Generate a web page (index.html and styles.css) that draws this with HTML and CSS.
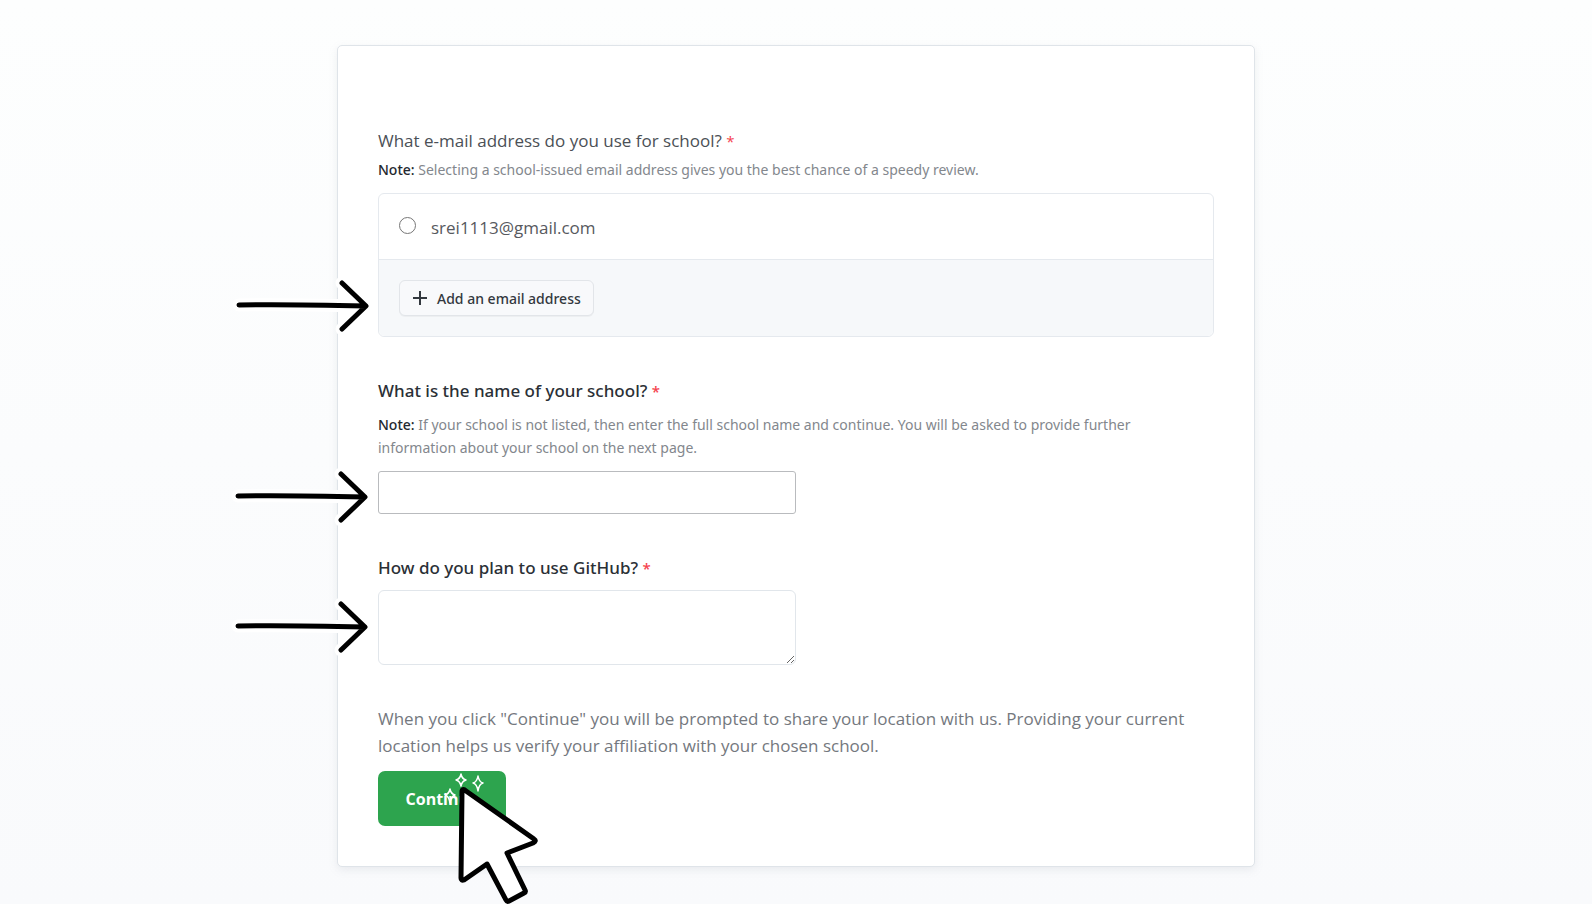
FILE: index.html
```html
<!DOCTYPE html>
<html lang="en">
	<head>
		<meta charset="UTF-8">
		<meta name="viewport" content="width=device-width, initial-scale=1">
		<title>GitHub Education</title>
		<link rel="stylesheet" href="styles.css">
	</head>
	<body>
		<main class="page">
			<form class="card">
				<fieldset class="field email_field">
					<legend class="title light">What e-mail address do you use for school? <span class="required">*</span></legend>
					<p class="note"><b>Note:</b> Selecting a school-issued email address gives you the best chance of a speedy review.</p>
					<div class="email_box">
						<label class="email_row">
							<input type="radio" name="email" class="radio">
							<span>srei1113@gmail.com</span>
						</label>
						<div class="add_row">
							<button type="button" class="add_btn">
								<svg width="16" height="16" viewBox="0 0 16 16" fill="none" stroke="#33383e" stroke-width="2" aria-hidden="true"><path d="M8 1v14M1 8h14"/></svg>
								Add an email address
							</button>
							<svg class="arrow arrow_email" width="144" height="62" viewBox="0 0 144 62" aria-hidden="true">
								<use href="#arrow"/>
							</svg>
						</div>
					</div>
				</fieldset>
				<div class="field">
					<label class="title" for="school">What is the name of your school? <span class="required">*</span></label>
					<p class="note school_note"><b>Note:</b> If your school is not listed, then enter the full school name and continue. You will be asked to provide further information about your school on the next page.</p>
					<div class="control">
						<input type="text" id="school" class="school">
						<svg class="arrow arrow_school" width="144" height="62" viewBox="0 0 144 62" aria-hidden="true">
							<use href="#arrow"/>
						</svg>
					</div>
				</div>
				<div class="field">
					<label class="title" for="plan">How do you plan to use GitHub? <span class="required">*</span></label>
					<div class="control">
						<textarea id="plan" class="plan"></textarea>
						<svg class="arrow arrow_plan" width="144" height="62" viewBox="0 0 144 62" aria-hidden="true">
							<defs>
								<g id="arrow" fill="none" stroke-linecap="round" stroke-linejoin="round">
									<path d="M9 30Q50 29 136 31M112 8l25 23-25 23" stroke="#fff" stroke-width="13"/>
									<path d="M9 30Q50 29 136 31M112 8l24 23-24 23" stroke="#000" stroke-width="5"/>
								</g>
							</defs>
							<use href="#arrow"/>
						</svg>
					</div>
				</div>
				<p class="location">When you click "Continue" you will be prompted to share your location with us. Providing your current location helps us verify your affiliation with your chosen school.</p>
				<div class="submit">
					<button type="button" class="continue">Continue</button>
					<svg class="cursor" width="100" height="133" viewBox="0 0 100 133" fill="none" stroke-linejoin="round" aria-hidden="true">
						<path d="M22 3q1 5 5 6-4 1-5 6-1-5-5-6 4-1 5-6zM39 5q1 6 5 7-4 1-5 8-1-7-5-8 4-1 5-7zM11 18q1 5 5 6-4 1-5 8-1-7-5-8 4-1 5-6z" stroke="#fff" stroke-width="1.5"/>
						<path d="M23 20Q24 17 27 20L95 68Q98 70 94 72L68 82 86 119Q87 121 85 122L70 130Q68 131 67 129L48 93 25 109Q22 110 22 107z" fill="#fff" stroke="#000" stroke-width="5"/>
					</svg>
				</div>
			</form>
		</main>
	</body>
</html>
```
FILE: styles.css
```css
*{
	box-sizing: border-box;
	padding: 0;
	margin: 0;
}
body{
	font-family: "Open Sans", "Noto Sans", sans-serif;
	font-size: 17px;
	line-height: 27px;
	color: #2b3036;
	background: linear-gradient(#fdfefe, #f9fafc);
}
.page{
	min-height: 100vh;
	padding: 45px 24px 37px;
}
.card{
	max-width: 918px;
	margin: 0 auto;
	padding: 81px 40px 40px;
	border: 1px solid #dfe4e9;
	border-radius: 5px;
	background: #fff;
	box-shadow: 0 3px 8px rgba(140, 149, 159, 0.15);
}
.field{
	margin-bottom: 40px;
	border: none;
}
.title{
	display: block;
	font-family: "Noto Sans", sans-serif;
	font-weight: 500;
}
.light{
	margin-bottom: 4px;
	font-family: "Open Sans", sans-serif;
	font-weight: 400;
	color: #4b5056;
}
.required{
	font-size: 15px;
	line-height: 1;
	color: #f5424d;
}
.note{
	padding-right: 40px;
	font-family: "Noto Sans", sans-serif;
	font-size: 14px;
	line-height: 23px;
	color: #83878d;
}
.note b{
	font-weight: 500;
	color: #24292f;
}
.school_note{
	margin: 9px 0 12px;
}
.email_box{
	margin-top: 12px;
	border: 1px solid #e5e9ee;
	border-radius: 6px;
}
.email_row{
	display: flex;
	align-items: flex-start;
	gap: 15px;
	padding: 20px 20px 18px;
	color: #57595e;
}
.radio{
	width: 17px;
	height: 17px;
	margin: 3px 0;
}
.add_row{
	position: relative;
	padding: 20px;
	border-top: 1px solid #e5e9ee;
	border-radius: 0 0 6px 6px;
	background: #f6f8fa;
}
.add_btn{
	display: flex;
	align-items: center;
	gap: 9px;
	height: 36px;
	padding: 0 12px;
	font: 500 14px "Noto Sans", sans-serif;
	color: #33383e;
	border: 1px solid #e2e5e9;
	border-radius: 6px;
	background: #f8f9fb;
	box-shadow: 0 1px 0 rgba(27, 31, 36, 0.04);
}
.control{
	position: relative;
}
.school, .plan{
	display: block;
	width: 50%;
	padding: 8px 12px;
	font: inherit;
	border: 1px solid #b9bbbe;
	border-radius: 3px;
	background: #fff;
}
.school{
	height: 43px;
}
.plan{
	height: 75px;
	margin-top: 9px;
	border-color: #e1e6eb;
	border-radius: 6px;
}
.location{
	color: #74787e;
}
.submit{
	position: relative;
	margin-top: 12px;
}
.continue{
	display: block;
	width: 128px;
	height: 55px;
	font: 700 16px "Open Sans", "Noto Sans", sans-serif;
	color: #fff;
	border: none;
	border-radius: 7px;
	background: #2da44e;
}
/* hand drawn arrows sit over the left edge of the card */
.arrow{
	position: absolute;
	left: -149px;
}
.arrow_email{
	top: 15px;
}
.arrow_school{
	top: -5px;
}
.arrow_plan{
	top: 6px;
}
.cursor{
	position: absolute;
	top: 0;
	left: 61px;
}
```
